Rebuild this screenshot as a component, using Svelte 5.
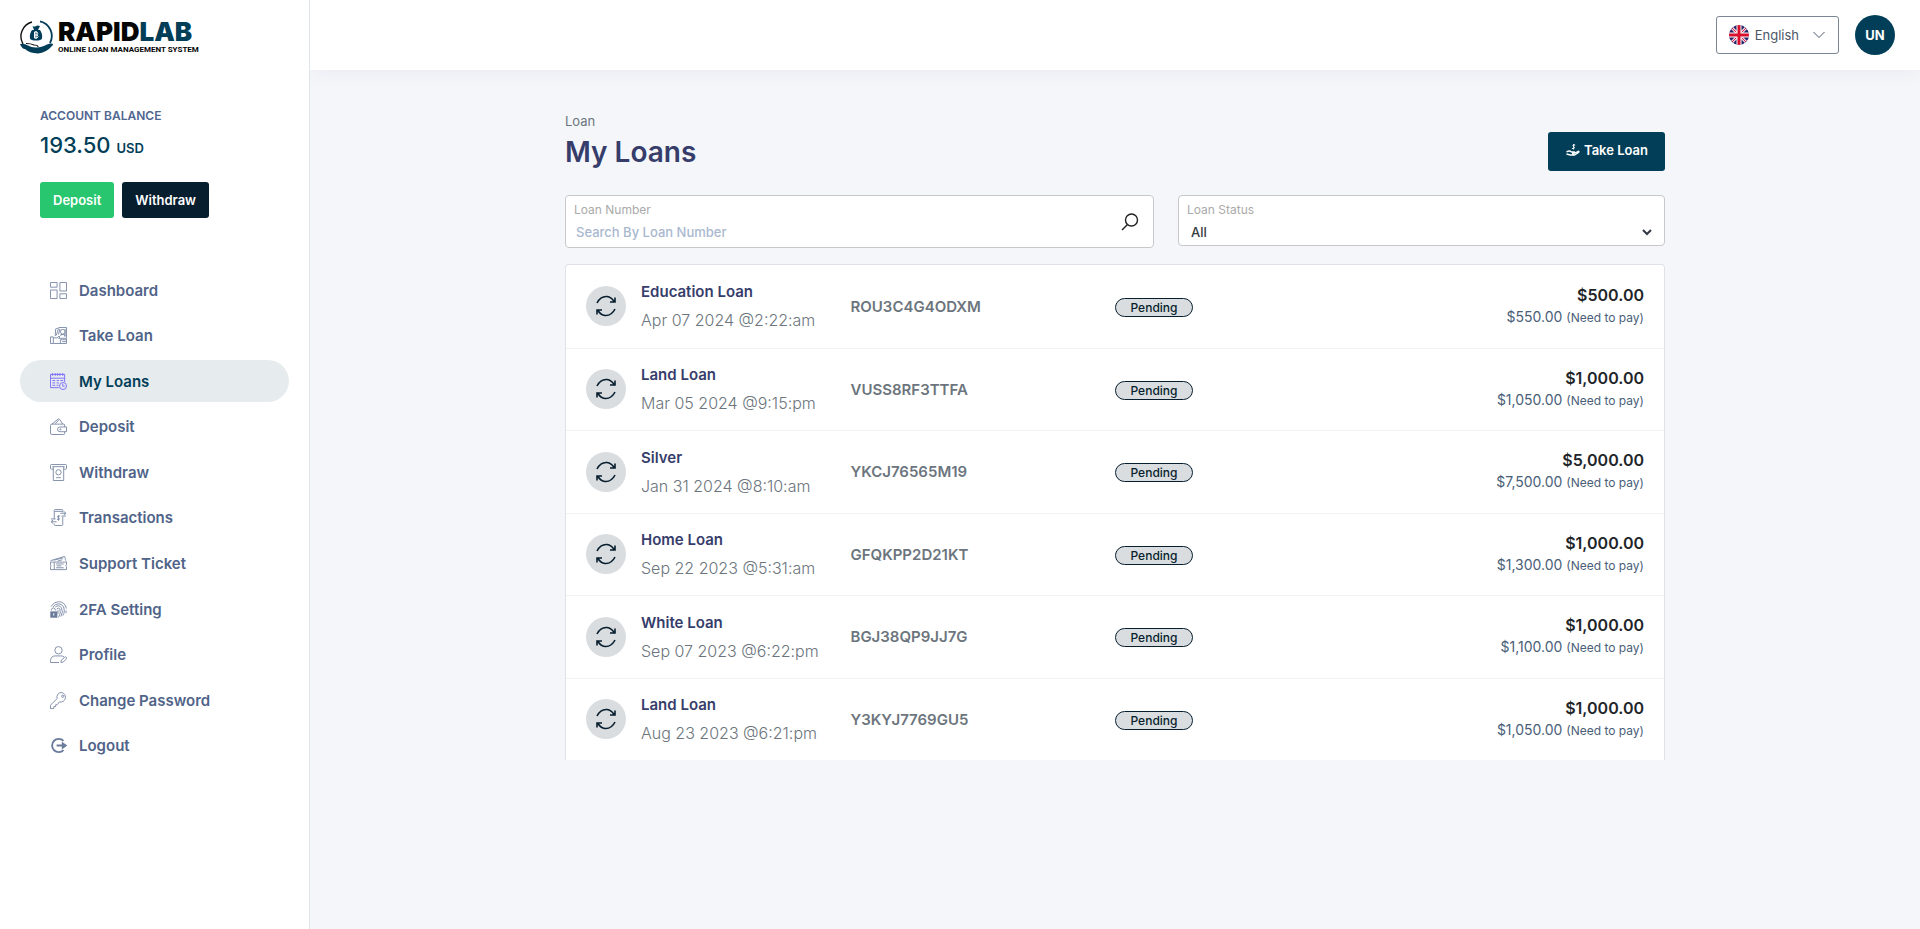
<script>
	let search = $state('');
	let status = $state('All');
	let active = $state('My Loans');

	const menu = [
		{ label: 'Dashboard', icon: 'dashboard' },
		{ label: 'Take Loan', icon: 'take' },
		{ label: 'My Loans', icon: 'loans' },
		{ label: 'Deposit', icon: 'wallet' },
		{ label: 'Withdraw', icon: 'withdraw' },
		{ label: 'Transactions', icon: 'transactions' },
		{ label: 'Support Ticket', icon: 'ticket' },
		{ label: '2FA Setting', icon: 'finger' },
		{ label: 'Profile', icon: 'profile' },
		{ label: 'Change Password', icon: 'key' },
		{ label: 'Logout', icon: 'logout' }
	];

	const loans = [
		{ name: 'Education Loan', date: 'Apr 07 2024 @2:22:am', number: 'ROU3C4G4ODXM', amount: '$500.00', pay: '$550.00' },
		{ name: 'Land Loan', date: 'Mar 05 2024 @9:15:pm', number: 'VUSS8RF3TTFA', amount: '$1,000.00', pay: '$1,050.00' },
		{ name: 'Silver', date: 'Jan 31 2024 @8:10:am', number: 'YKCJ76565M19', amount: '$5,000.00', pay: '$7,500.00' },
		{ name: 'Home Loan', date: 'Sep 22 2023 @5:31:am', number: 'GFQKPP2D21KT', amount: '$1,000.00', pay: '$1,300.00' },
		{ name: 'White Loan', date: 'Sep 07 2023 @6:22:pm', number: 'BGJ38QP9JJ7G', amount: '$1,000.00', pay: '$1,100.00' },
		{ name: 'Land Loan', date: 'Aug 23 2023 @6:21:pm', number: 'Y3KYJ7769GU5', amount: '$1,000.00', pay: '$1,050.00' }
	];

	let shown = $derived(
		loans.filter((loan) => loan.number.includes(search.toUpperCase()) && (status === 'All' || status === 'Pending'))
	);
</script>

{#snippet menuIcon(name)}
	<svg class="menu-icon" viewBox="0 0 18 18" aria-hidden="true">
		{#if name === 'dashboard'}
			<path d="M.5.5h7v5h-7zM.5 8.500h7v9h-7zM10.500.5h7v9h-7zM10.500 12.500h7v5h-7z" />
		{:else if name === 'take'}
			<path d="M.5 10.500h3v7h-3zM3.500 11.500h4l2-2 1 1-1.500 1.500h8.500v5.500h-14M5.500 9.500 6 2l4-1.200M9.500.5h8v11M6.500 9l2.500-7M9 8l1.500-6M16 2v8M11 17v-3.500h6" />
			<circle cx="13.500" cy="5" r="2.500" />
			<path d="M11.500 9.500V8h4v2M13 15.500h4" />
		{:else if name === 'loans'}
			<path d="M9.500 15.500h-9v-14h15v8M.5 5.500h15M2.500 0v3M5.500 0v3M8 0v3M10.500 0v3M13.500 0v3M2.500 8h3M7 8h2.500M11 8h3M2.500 10.500h3M7 10.500h2.500M2.500 13h3M7 13h2" />
			<circle cx="13.800" cy="13.800" r="3.700" />
			<path d="M13.500 11.500v2.500h2" />
		{:else if name === 'wallet'}
			<path d="M15.500 14.500v2q0 1-1 1H2q-1.500 0-1.500-1.500V8Q.5 6.500 2 6.500h12.500q1 0 1 1v2M2 6.500 9 .8l1.500 1L13.500 6.500M5.500 6 9.500 2M17.500 9.500h-7q-2.500 0-2.500 2.500t2.500 2.500h7z" />
			<circle cx="11" cy="12" r=".6" />
		{:else if name === 'withdraw'}
			<path d="M3.500 5.500h-2q-1 0-1-1v-3q0-1 1-1h15q1 0 1 1v3q0 1-1 1h-2M2.500 2.800h13M3.500 3v14.500h11V3M6.500 14.500h5" />
			<circle cx="9" cy="8.800" r="2.800" />
		{:else if name === 'transactions'}
			<path d="M4.500 10.500v-9q0-1 1-1h7q1 0 1 1v2M13.500 8.500v8q0 1-1 1h-7q-1 0-1-1v-1M5 2.500h8M11 4.500h5.500M14.500 2.500l2.500 2-2.500 2M12 7.500h5M7 13.500H1.500M3.500 11.500 1 13.500l2.500 2M1 10.500h5M10.800 7.500H8.500q-1.500 1 0 1.700 2 .5 1.300 1.800H7.300M9 6.500v6" />
		{:else if name === 'ticket'}
			<path d="M.5 7.500h17v3q-1.500.5 0 2v3H.5v-3q1.500-1 0-2zM.5 6 15.500 1.500l.8 2.500q-1 1 1.200 2.500M4 5.500l10-2.500M4.500 7.500v8M6.500 9.500h8M6.500 13.500h8M7 11.500h5M8 6.500l5-1.500" />
		{:else if name === 'finger'}
			<path d="M1 6Q4 .8 9 .7q7 .3 8.400 7.300M3 6.500q2.500-3.500 6-3.500 6 .5 6.200 7.500-.2 3-1.700 5M5.500 6.500Q9 3.500 12 7q2.500 4-.5 9.500M7 8.500q2-2 3.500 0 1.500 4-1.500 9M8.500 9.500v4M17 10v3M1.500 10V8.500q2-2.500 4 0V10" />
			<path class="solid" d="M.3 11h7.500v6.700H.3z" />
			<path class="knock" d="M4 13v2.500" />
		{:else if name === 'profile'}
			<circle cx="9" cy="4.500" r="3.900" />
			<path d="M9.500 17.500h-9v-2q.5-5 5-5h6q2 0 3.500 1M11.500 17.500l.5-2.500 3.500-3q1-.8 1.800 0 .8 1-.1 1.800L14 17z" />
		{:else if name === 'key'}
			<path d="M12.500.5a5 5 0 0 0-5 6.500L.5 14v3.500h3.500v-2h2V13.500h1.500L10 10.500a5 5 0 1 0 2.500-10z" />
			<circle cx="13.500" cy="4.500" r="1.200" />
		{:else}
			<path class="thick" d="M14.300 4.200A7 7 0 1 0 14.300 13.800M7 9h9M13.500 6.800 16.500 9l-3 2.200z" />
		{/if}
	</svg>
{/snippet}

<div class="layout">
	<aside class="sidebar">
		<a class="logo" href="#home">
			<svg class="logo-mark" viewBox="0 0 34 34" aria-hidden="true">
				<path d="M3 24A15 15 0 0 1 12 2" fill="none" stroke="#111" stroke-width="1.400" />
				<path d="M20 1.300A15 15 0 0 1 30 23" fill="none" stroke="#023e58" stroke-width="1.800" />
				<path d="M0 24q4-1 8 1.500 4 2.500 9 2c5 0 9-3 13-4 3-.4 3.600.6 2.500 2Q26 33 18 33.500 9 33 5 29 2 29 0 24z" fill="#023e58" />
				<path d="M6 23.500q5 0 8 1.500 4 0 4 2" stroke="#111" stroke-width="1.200" fill="none" />
				<path d="M12.500 6q2 1 3.500 0t4 0l-2 4h2q3 4.500 2 8.500-1 2-6 2t-6-2q-1-4 2-8.500h2z" fill="#023e58" />
				<path d="M14.500 12v6M14.500 12h2.500q1.500 1.500 0 3 2 1.500 0 3h-2.500M14.500 15h2.500M16 11v8" fill="none" stroke="#fff" />
			</svg>
			<span class="logo-words">
				<strong>RAPID<b>LAB</b></strong>
				<small>ONLINE LOAN MANAGEMENT SYSTEM</small>
			</span>
		</a>

		<section class="balance">
			<h6>ACCOUNT BALANCE</h6>
			<p>193.50 <span>USD</span></p>
			<div class="balance-actions">
				<button class="btn deposit">Deposit</button>
				<button class="btn withdraw">Withdraw</button>
			</div>
		</section>

		<nav class="menu">
			{#each menu as item}
				<a
					href="#{item.icon}"
					class:active={active === item.label}
					onclick={() => (active = item.label)}
				>
					{@render menuIcon(item.icon)}
					<span>{item.label}</span>
				</a>
			{/each}
		</nav>
	</aside>

	<div class="page">
		<header class="topbar">
			<button class="language">
				<svg class="flag" viewBox="0 0 20 20" aria-hidden="true">
					<clipPath id="round"><circle cx="10" cy="10" r="10" /></clipPath>
					<g clip-path="url(#round)">
						<path fill="#24256b" d="M0 0h20v20H0z" />
						<path stroke="#f3d9e2" stroke-width="3" d="m0 0 20 20M20 0 0 20" />
						<path stroke="#d32044" stroke-width="1" d="m0 0 20 20M20 0 0 20" />
						<path stroke="#fff" stroke-width="5" d="M10 0v20M0 10h20" />
						<path stroke="#d8102d" stroke-width="3" d="M10 0v20M0 10h20" />
					</g>
				</svg>
				<span>English</span>
				<svg class="caret" viewBox="0 0 12 8" aria-hidden="true"><path d="m.5 1 5.500 5.500L11.500 1" /></svg>
			</button>
			<button class="avatar">UN</button>
		</header>

		<main class="content">
			<div class="page-head">
				<div>
					<p class="pretitle">Loan</p>
					<h2>My Loans</h2>
				</div>
				<button class="btn take-loan">
					<svg viewBox="0 0 14 12" aria-hidden="true">
						<path d="M9.200 1H7.500q-1.500.8 0 1.600 1.800.7 0 1.900H6M7.700 0v5.500" />
						<path class="hand" d="M.5 8q3-2 5 0h3q1 1-1 1.500H6M9 9l3.500-1.800q1 .3 0 1.300l-4 2.500H4.500L.5 10" />
					</svg>
					Take Loan
				</button>
			</div>

			<form class="filters" onsubmit={(e) => e.preventDefault()}>
				<div class="field search">
					<div class="field-text">
						<label for="number">Loan Number</label>
						<input id="number" type="text" placeholder="Search By Loan Number" bind:value={search} />
					</div>
					<button type="submit" aria-label="Search">
						<svg viewBox="0 0 18 18" aria-hidden="true">
							<circle cx="10.500" cy="7" r="6" />
							<path d="M6.500 11.500 1 17" />
						</svg>
					</button>
				</div>
				<div class="field status">
					<label for="status">Loan Status</label>
					<div class="select">
						<select id="status" bind:value={status}>
							<option>All</option>
							<option>Pending</option>
							<option>Running</option>
							<option>Paid</option>
						</select>
						<svg viewBox="0 0 10 7" aria-hidden="true"><path d="m1 1 4 4 4-4" /></svg>
					</div>
				</div>
			</form>

			<ul class="loans">
				{#each shown as loan}
					<li>
						<div class="loan-info">
							<span class="loan-icon">
								<svg viewBox="0 0 20 22" aria-hidden="true">
									<path d="M1 8q3.500-7 10-6.500 4.500.5 7 5M19 2.500V7h-5M19 14q-3.500 7-10 6.500-4.500-.5-7-5M1 19.500V15h5" />
								</svg>
							</span>
							<div>
								<h6>{loan.name}</h6>
								<p>{loan.date}</p>
							</div>
						</div>
						<div class="loan-number">{loan.number}</div>
						<div class="loan-status"><span class="badge">Pending</span></div>
						<div class="loan-amount">
							<strong>{loan.amount}</strong>
							<p>{loan.pay} <small>(Need to pay)</small></p>
						</div>
					</li>
				{/each}
			</ul>
		</main>
	</div>
</div>

<style>
	:global(body) {
		background: #f4f6fa;
		font-family: Inter, "Noto Sans", sans-serif;
		font-size: 16px;
		color: #6c757d;
	}

	* {
		box-sizing: border-box;
	}

	h2, h6, p, ul {
		margin: 0;
		padding: 0;
	}

	button, input, select {
		font-family: inherit;
	}

	button {
		cursor: pointer;
	}

	svg {
		fill: none;
		flex-shrink: 0;
	}

	.layout {
		display: grid;
		grid-template-columns: 310px 1fr;
		min-height: 100vh;
	}

	.sidebar {
		background: #fff;
		border-right: 1px solid #dfe4ea;
		padding: 20px;
	}

	.logo {
		display: flex;
		gap: 4px;
		height: 34px;
		text-decoration: none;
		color: #050505;
	}

	.logo-mark {
		width: 34px;
		height: 34px;
	}

	.logo-words {
		display: flex;
		flex-direction: column;
	}

	.logo-words strong {
		font-size: 26px;
		font-weight: 900;
		line-height: 24px;
	}

	.logo-words b {
		font-weight: 900;
		color: #023e58;
	}

	.logo-words small {
		font-family: Roboto, sans-serif;
		font-size: 8px;
		font-weight: 700;
		line-height: 12px;
		white-space: nowrap;
	}

	.balance {
		padding: 50px 20px 0;
	}

	.balance h6 {
		font-size: 12px;
		font-weight: 600;
		line-height: 24px;
		color: #506690;
	}

	.balance p {
		font-size: 22px;
		font-weight: 500;
		line-height: 34px;
		color: #023e58;
	}

	.balance span {
		font-size: 13px;
		font-weight: 600;
	}

	.balance-actions {
		display: flex;
		gap: 8px;
		margin-top: 17px;
	}

	.btn {
		border: 0;
		border-radius: 3px;
		color: #fff;
		font-size: 13px;
		font-weight: 600;
	}

	.balance .btn {
		height: 36px;
		padding: 0 13px;
	}

	.deposit {
		background: #28c76f;
	}

	.withdraw {
		background: #071e2e;
	}

	.menu {
		display: flex;
		flex-direction: column;
		justify-content: space-between;
		height: 498px;
		margin-top: 51px;
	}

	.menu a {
		display: flex;
		align-items: center;
		gap: 12px;
		height: 42px;
		padding: 0 30px;
		border-radius: 21px;
		font-size: 15px;
		font-weight: 600;
		text-decoration: none;
		color: #506388;
	}

	.menu a.active {
		background: #e6ebee;
		color: #023e58;
	}

	.menu-icon {
		width: 17px;
		height: 17px;
		stroke: #7e8ca8;
	}

	.menu-icon .solid {
		fill: #6a7b9c;
		stroke: none;
	}

	.menu-icon .knock {
		stroke: #fff;
	}

	.menu-icon .thick {
		stroke: #6a7b9c;
		stroke-width: 2;
	}

	.active .menu-icon {
		stroke: #7c6cf5;
	}

	.topbar {
		display: flex;
		align-items: center;
		justify-content: flex-end;
		gap: 16px;
		height: 70px;
		padding: 0 25px;
		background: #fff;
		box-shadow: 0 0 25px rgba(30, 40, 70, 0.06);
		clip-path: inset(0 0 -40px 0);
	}

	.language {
		display: flex;
		align-items: center;
		gap: 6px;
		height: 38px;
		padding: 0 13px 0 12px;
		background: #fff;
		border: 1px solid #7b8794;
		border-radius: 3px;
		font-size: 13px;
		color: #4b5866;
	}

	.flag {
		width: 20px;
		height: 20px;
	}

	.caret {
		width: 12px;
		height: 8px;
		margin-left: 8px;
		stroke: #4b5866;
	}

	.avatar {
		width: 40px;
		height: 40px;
		padding: 0;
		border: 0;
		border-radius: 50%;
		background: #023e58;
		color: #fff;
		font-size: 13px;
		font-weight: 700;
	}

	.content {
		max-width: 1100px;
		margin: 0 auto;
		padding-top: 39px;
	}

	.page-head {
		display: flex;
		align-items: flex-end;
		justify-content: space-between;
		margin-bottom: 24px;
	}

	.pretitle {
		font-size: 13px;
		line-height: 24px;
	}

	.page-head h2 {
		font-size: 28px;
		font-weight: 600;
		line-height: 38px;
		color: #363d6b;
	}

	.take-loan {
		display: flex;
		align-items: center;
		gap: 4px;
		height: 39px;
		padding: 0 17px 3px 18px;
		background: #023e58;
	}

	.take-loan svg {
		width: 14px;
		height: 12px;
		stroke: #fff;
	}

	.take-loan .hand {
		stroke-width: 1.3;
	}

	.filters {
		display: grid;
		grid-template-columns: 589fr 487fr;
		align-items: start;
		gap: 24px;
		margin-bottom: 16px;
	}

	.field {
		background: #fff;
		border: 1px solid #c8c8cc;
		border-radius: 4px;
		padding: 4px 8px;
	}

	.field label {
		display: block;
		font-size: 12px;
		line-height: 20px;
		color: #aaa;
	}

	.search {
		display: flex;
		align-items: center;
		height: 53px;
	}

	.field-text {
		flex: 1;
	}

	.field input {
		width: 100%;
		height: 24px;
		padding: 0 2px;
		border: 0;
		outline: 0;
		font-size: 13px;
		font-weight: 500;
		color: #343a40;
	}

	.field input::placeholder {
		color: #a9b8cf;
		opacity: 1;
	}

	.search button {
		display: flex;
		padding: 0 6px;
		border: 0;
		background: none;
	}

	.search svg {
		width: 18px;
		height: 18px;
		stroke: #222;
		stroke-width: 1.4;
	}

	.status {
		height: 51px;
	}

	.select {
		display: flex;
		align-items: center;
	}

	.select select {
		flex: 1;
		height: 24px;
		padding: 0 4px;
		border: 0;
		outline: 0;
		background: none;
		appearance: none;
		font-size: 13px;
		font-weight: 500;
		color: #343a40;
	}

	.select svg {
		width: 10px;
		height: 7px;
		margin-right: 4px;
		stroke: #333844;
		stroke-width: 2;
	}

	.loans {
		display: grid;
		grid-auto-rows: 1fr;
		min-height: 496px;
		border: 1px solid #dee2e8;
		border-bottom: 0;
		border-radius: 4px 4px 0 0;
		background: #fff;
		list-style: none;
	}

	.loans li {
		display: grid;
		grid-template-columns: repeat(4, 1fr);
		align-items: center;
		padding: 0 20px;
	}

	.loans li + li {
		border-top: 1px solid #f0f2f3;
	}

	.loan-info {
		display: flex;
		align-items: center;
		gap: 15px;
		white-space: nowrap;
	}

	.loan-icon {
		display: grid;
		place-items: center;
		width: 40px;
		height: 40px;
		border-radius: 50%;
		background: #dadde0;
	}

	.loan-icon svg {
		width: 20px;
		height: 22px;
		stroke: #071e2e;
		stroke-width: 1.6;
	}

	.loan-info h6 {
		font-size: 15px;
		font-weight: 600;
		line-height: 29px;
		color: #363d6b;
	}

	.loan-info p {
		font-weight: 300;
		line-height: 29px;
	}

	.loan-number {
		font-size: 15px;
		font-weight: 600;
	}

	.badge {
		display: inline-block;
		width: 78px;
		border: 1px solid #071e2e;
		border-radius: 10px;
		background: #dadde0;
		color: #071e2e;
		font-size: 12px;
		font-weight: 500;
		line-height: 17px;
		text-align: center;
	}

	.loan-amount {
		text-align: right;
	}

	.loan-amount strong {
		display: block;
		font-weight: 600;
		line-height: 22px;
		color: #212529;
	}

	.loan-amount p {
		font-size: 14px;
		line-height: 22px;
		color: #4a6078;
	}

	.loan-amount small {
		font-size: 12px;
	}
</style>
